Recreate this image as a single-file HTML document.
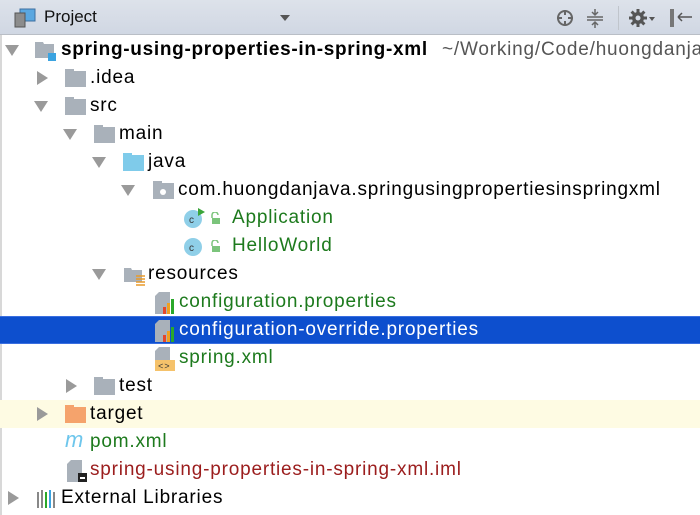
<!DOCTYPE html><html><head><style>
*{margin:0;padding:0;box-sizing:border-box}
body{width:700px;height:515px;overflow:hidden;background:#fff;font-family:"Liberation Sans",sans-serif;font-size:19px;letter-spacing:0.8px;position:relative}
.hdr{position:absolute;left:0;top:0;width:700px;height:35px;background:linear-gradient(#dde2ea,#d0d7e3);border-bottom:1px solid #b9bec6;letter-spacing:0}
.lb{position:absolute;left:0;top:35px;width:2px;height:480px;background:#d8d8d8}
.r{position:absolute;left:2px;width:698px;height:28px}
.t{position:absolute;top:0;line-height:28px;white-space:nowrap;color:#000}
.ad{position:absolute;width:0;height:0;border-left:7px solid transparent;border-right:7px solid transparent;border-top:11px solid #9a9a9a;top:9px}
.ar{position:absolute;width:0;height:0;border-top:7px solid transparent;border-bottom:7px solid transparent;border-left:11px solid #9a9a9a;top:7px}
.f{position:absolute;top:7px;width:21px;height:16px;background:#a9b1ba}
.f:before{content:"";position:absolute;left:0;top:-2px;width:9px;height:3px;background:inherit}
.g{color:#1d7a1d}
</style></head><body>
<div class="hdr">
<svg style="position:absolute;left:14px;top:8px" width="22" height="20"><rect x="6" y="1" width="15" height="12" fill="#5aa7e0" stroke="#3d6fa0"/><rect x="1" y="5" width="10" height="14" fill="#8c8c8c" stroke="#555"/></svg>
<span style="position:absolute;left:44px;top:7px;font-size:17px;color:#111">Project</span>
<div style="position:absolute;left:280px;top:15px;border-left:5px solid transparent;border-right:5px solid transparent;border-top:6px solid #555"></div>
<svg style="position:absolute;left:555px;top:8px" width="20" height="20"><circle cx="10" cy="10" r="7" fill="none" stroke="#666" stroke-width="2"/><path d="M10 2v5M10 13v5M2 10h5M13 10h5" stroke="#666" stroke-width="2"/></svg>
<svg style="position:absolute;left:585px;top:7px" width="20" height="22"><path d="M2 10h16M2 13h16M10 2v6M7 5l3 3 3-3M10 21v-6M7 18l3-3 3 3" stroke="#666" stroke-width="1.5" fill="none"/></svg>
<div style="position:absolute;left:618px;top:6px;width:1px;height:24px;background:#c0c5cc"></div>
<svg style="position:absolute;left:628px;top:8px" width="30" height="20"><circle cx="10" cy="10" r="6" fill="#555"/><path d="M10 1v18M1 10h18M3.6 3.6l12.8 12.8M16.4 3.6L3.6 16.4" stroke="#555" stroke-width="3"/><circle cx="10" cy="10" r="2.5" fill="#d5dbe5"/><path d="M21 9h6l-3 4z" fill="#555"/></svg>
<svg style="position:absolute;left:668px;top:7px" width="28" height="22"><rect x="2" y="2" width="4" height="18" fill="#777"/><path d="M10 10h14M10 10l4-4M10 10l4 4" stroke="#555" stroke-width="1.5" fill="none"/></svg>
</div>
<div class="lb"></div>

<div class="r" style="top:36px"><div class="ad" style="left:3px"></div>
<svg style="position:absolute;left:32px;top:5px" width="24" height="20"><path d="M1 1h8l1 2h10v14H1z" fill="#a9b1ba"/><rect x="14" y="12" width="8" height="8" fill="#3ba3e0"/></svg>
<span class="t" style="left:59px;font-weight:bold;letter-spacing:0.7px">spring-using-properties-in-spring-xml</span><span class="t" style="left:440px;color:#555">~/Working/Code/huongdanjava</span></div>

<div class="r" style="top:64px"><div class="ar" style="left:35px"></div><div class="f" style="left:63px"></div><span class="t" style="left:88px">.idea</span></div>
<div class="r" style="top:92px"><div class="ad" style="left:32px"></div><div class="f" style="left:63px"></div><span class="t" style="left:88px">src</span></div>
<div class="r" style="top:120px"><div class="ad" style="left:61px"></div><div class="f" style="left:92px"></div><span class="t" style="left:117px">main</span></div>
<div class="r" style="top:148px"><div class="ad" style="left:90px"></div><div class="f" style="left:121px;background:#7fcbea"></div><span class="t" style="left:146px">java</span></div>
<div class="r" style="top:176px"><div class="ad" style="left:119px"></div><div class="f" style="left:151px"></div><div style="position:absolute;left:158px;top:13px;width:6px;height:6px;border-radius:3px;background:#fff"></div><span class="t" style="left:176px">com.huongdanjava.springusingpropertiesinspringxml</span></div>

<div class="r" style="top:204px"><svg style="position:absolute;left:181px;top:3px" width="24" height="22"><circle cx="10" cy="12" r="9" fill="#8fcfe8"/><text x="6" y="16" font-size="10" font-family="Liberation Sans" fill="#333">c</text><path d="M15 1l7 4-7 4z" fill="#3aa53a"/></svg>
<svg style="position:absolute;left:207px;top:8px" width="14" height="14"><path d="M3 6V3a3 3 0 0 1 6 0" stroke="#7bc47b" fill="none" stroke-width="1.5"/><rect x="3" y="6" width="8" height="6" fill="#7bc47b"/></svg><span class="t g" style="left:230px">Application</span></div>
<div class="r" style="top:232px"><svg style="position:absolute;left:181px;top:3px" width="24" height="22"><circle cx="10" cy="12" r="9" fill="#8fcfe8"/><text x="6" y="16" font-size="10" font-family="Liberation Sans" fill="#333">c</text></svg>
<svg style="position:absolute;left:207px;top:8px" width="14" height="14"><path d="M3 6V3a3 3 0 0 1 6 0" stroke="#7bc47b" fill="none" stroke-width="1.5"/><rect x="3" y="6" width="8" height="6" fill="#7bc47b"/></svg><span class="t g" style="left:230px">HelloWorld</span></div>

<div class="r" style="top:260px"><div class="ad" style="left:90px"></div>
<svg style="position:absolute;left:121px;top:5px" width="24" height="22"><path d="M1 3h7l1 2h10v12H1z" fill="#a9b1ba"/><path d="M13 11h9M13 14h9M13 17h9M13 20h9" stroke="#e89a2a" stroke-width="1.5"/></svg><span class="t" style="left:146px">resources</span></div>

<div class="r" style="top:288px"><svg style="position:absolute;left:152px;top:3px" width="24" height="24"><path d="M5 1h11v22H1V5z" fill="#a9b1ba"/><rect x="9" y="16" width="3" height="7" fill="#e5472b"/><rect x="13" y="12" width="3" height="11" fill="#f0a020"/><rect x="17" y="8" width="3" height="15" fill="#2aa82a"/></svg><span class="t g" style="left:177px">configuration.properties</span></div>

<div class="r" style="top:316px;left:0;width:700px;background:#0d4fce;border-top:1px solid #3a6fe0;border-bottom:1px solid #3a6fe0"><svg style="position:absolute;left:154px;top:2px" width="24" height="24"><path d="M5 1h11v22H1V5z" fill="#a9b1ba"/><rect x="9" y="16" width="3" height="7" fill="#e5472b"/><rect x="13" y="12" width="3" height="11" fill="#f0a020"/><rect x="17" y="8" width="3" height="15" fill="#2aa82a"/></svg><span class="t" style="left:179px;color:#fff;top:-1px">configuration-override.properties</span></div>

<div class="r" style="top:344px"><svg style="position:absolute;left:152px;top:2px" width="24" height="26"><path d="M5 1h11v14H1V5z" fill="#a9b1ba"/><rect x="1" y="14" width="20" height="11" fill="#f5c26b"/><text x="4" y="23" font-size="9" font-family="Liberation Mono" fill="#333">&lt;&gt;</text></svg><span class="t g" style="left:177px">spring.xml</span></div>

<div class="r" style="top:372px"><div class="ar" style="left:64px"></div><div class="f" style="left:92px"></div><span class="t" style="left:117px">test</span></div>
<div class="r" style="top:400px;left:0;width:700px;background:#fefbe3"><div class="ar" style="left:37px"></div><div class="f" style="left:65px;background:#f5a36c"></div><span class="t" style="left:90px">target</span></div>
<div class="r" style="top:428px"><span class="t" style="left:63px;color:#6ec6ec;font-style:italic;font-size:22px;top:-2px">m</span><span class="t g" style="left:88px">pom.xml</span></div>
<div class="r" style="top:456px"><svg style="position:absolute;left:64px;top:3px" width="24" height="24"><path d="M5 1h11v22H1V5z" fill="#a9b1ba"/><rect x="12" y="14" width="9" height="9" fill="#222"/><rect x="14" y="18" width="5" height="2" fill="#fff"/></svg><span class="t" style="left:88px;color:#9b1d1d">spring-using-properties-in-spring-xml.iml</span></div>
<div class="r" style="top:484px"><div class="ar" style="left:6px"></div><svg style="position:absolute;left:34px;top:6px" width="22" height="18"><rect x="1" y="2" width="2" height="16" fill="#888"/><rect x="5" y="0" width="2" height="18" fill="#888"/><rect x="9" y="2" width="2" height="16" fill="#2aa82a"/><rect x="13" y="0" width="2" height="18" fill="#3ba3e0"/><rect x="17" y="2" width="2" height="16" fill="#888"/></svg><span class="t" style="left:59px">External Libraries</span></div>
</body></html>
